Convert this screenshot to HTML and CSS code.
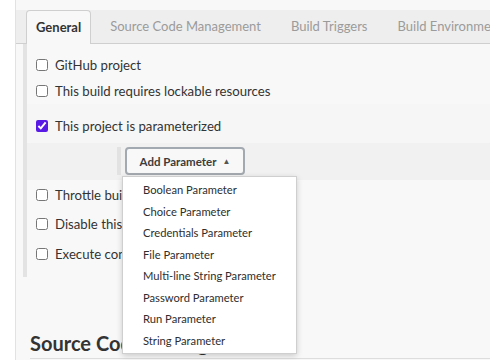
FILE: index.html
```html
<!DOCTYPE html>
<html>
<head>
  <title>Configure</title>
  <meta charset="utf-8">
  <link rel="stylesheet" href="styles.css">
</head>
<body>
  <div class="page">
    <div class="tabs">
      <div class="tab active">General</div>
      <div class="tab">Source Code Management</div>
      <div class="tab">Build Triggers</div>
      <div class="tab">Build Environment</div>
    </div>

    <div class="section">
      <label class="row first"><input type="checkbox"> GitHub project</label>
      <label class="row"><input type="checkbox"> This build requires lockable resources</label>
      <label class="row param"><input type="checkbox" checked> This project is parameterized</label>
      <div class="nested">
        <div class="nested-inner">
          <div class="dropdown">
            <button class="add-btn">Add Parameter <span class="caret">&#9650;</span></button>
            <ul class="menu">
              <li>Boolean Parameter</li>
              <li>Choice Parameter</li>
              <li>Credentials Parameter</li>
              <li>File Parameter</li>
              <li>Multi-line String Parameter</li>
              <li>Password Parameter</li>
              <li>Run Parameter</li>
              <li>String Parameter</li>
            </ul>
          </div>
        </div>
      </div>
      <label class="row r4"><input type="checkbox"> Throttle builds</label>
      <label class="row r5"><input type="checkbox"> Disable this project</label>
      <label class="row r6"><input type="checkbox"> Execute concurrent builds if necessary</label>
    </div>

    <h2 class="heading">Source Code Management</h2>
  </div>
</body>
</html>
```

FILE: styles.css
```css
* {margin: 0; padding: 0; box-sizing: border-box;}
body {background: #fff; font-family: 'Lato', sans-serif; color: #333; overflow: hidden;}

.page {margin-left: 15px; border-left: 1px solid #e2e2e2; background: #f8f8f8; height: 360px; padding-top: 10px; overflow: hidden;}

.tabs {display: flex; align-items: flex-end; height: 34px; background: #eeeeee; border-bottom: 1px solid #cfcfcf; padding-left: 10px; white-space: nowrap;}
.tab {font-size: 13px; color: #9b9b9b; padding: 0 15px; height: 33px; line-height: 33px; flex-shrink: 0;}
.tab.active {color: #333; font-weight: 700; background: #f8f8f8; border: 1px solid #cfcfcf; border-bottom: none; border-radius: 4px 4px 0 0; height: 34px; margin: 0 4px -1px 0; padding: 0 9px;}

.section {margin-left: 7px; border-left: 4px solid #e3e3e3; padding: 8px 0 8px 0;}

.row {display: flex; align-items: center; font-size: 13.2px; height: 26px; padding-left: 9px; color: #333;}
.row input {width: 12px; height: 12px; margin: 0 7px 0 0; accent-color: #5a1ae6;}
.row.param {height: 39px; padding-top: 4px; background: #f6f6f6;}
.row.r4 {height: 28px; padding-top: 2px;}
.row.r5 {height: 31px;}
.row.r6 {height: 30px;}

.nested {background: #f1f1f1; padding: 4px 0 5px 90px;}
.nested-inner {border-left: 4px solid #e2e2e2; padding-left: 4px; height: 28px;}

.dropdown {position: relative; display: inline-block;}
.add-btn {font-family: 'Lato', sans-serif; font-size: 11.5px; font-weight: 700; color: #3c3c3c; background: #f8f8f8; border: 2px solid #a3a9b0; border-radius: 4px; width: 120px; height: 28px; display: flex; align-items: center; justify-content: center; gap: 6px;}
.caret {font-size: 8px; color: #555;}

.menu {position: absolute; top: 29px; left: -3px; width: 175px; list-style: none; background: #fff; border: 1px solid #cfcfcf; box-shadow: 0 2px 6px rgba(0,0,0,0.18); padding: 2px 0; z-index: 2;}
.menu li {font-size: 11.2px; line-height: 21.5px; padding-left: 20px; color: #2e2e2e; white-space: nowrap;}

.heading {font-size: 20px; font-weight: 700; color: #333; margin: 54px 0 0 14px; padding-bottom: 3px; border-bottom: 1px solid #ddd; white-space: nowrap;}
```
